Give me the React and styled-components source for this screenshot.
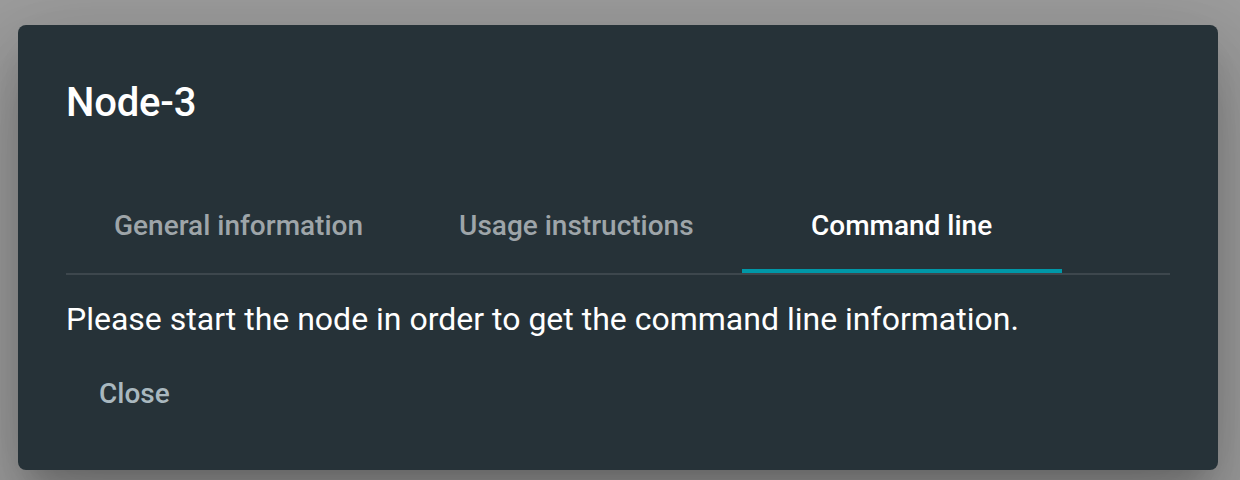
import React, { useState } from 'react';
import styled, { createGlobalStyle } from 'styled-components';

const GlobalStyle = createGlobalStyle`
    html, body {
        margin: 0;
        padding: 0;
        background: #ffffff;
        font-family: Roboto, "Noto Sans", "Liberation Sans", sans-serif;
        -webkit-font-smoothing: antialiased;
    }
`;

const TABS = [ 'General information', 'Usage instructions', 'Command line' ];

const
    Backdrop = styled.div`
        width: 1240px;
        height: 480px;
        box-sizing: border-box;
        padding: 25px 22px 0 18px;
        background-color: rgba(0, 0, 0, 0.385);
        overflow: hidden;
    `,
    Dialog = styled.div`
        width: 1200px;
        height: 445px;
        box-sizing: border-box;
        padding: 0 48px;
        display: flex;
        flex-direction: column;
        background-color: #263238;
        color: #ffffff;
        border-radius: 8px;
        box-shadow: 0 22px 30px -14px rgba(0,0,0,0.2),
                    0 48px 76px 6px rgba(0,0,0,0.14),
                    0 18px 92px 16px rgba(0,0,0,0.12);
    `,
    Title = styled.h2`
        margin: 46px 0 0;
        font-size: 40px;
        font-weight: 500;
        line-height: 64px;
        letter-spacing: -0.2px;
    `,
    TabBar = styled.div`
        display: flex;
        margin-top: 42px;
        border-bottom: 2px solid #3d474d;
    `,
    Tab = styled.button`
        position: relative;
        min-width: 320px;
        height: 96px;
        padding: 0 48px;
        border: 0;
        background: none;
        font-family: inherit;
        font-size: 28px;
        font-weight: 500;
        line-height: 49px;
        color: ${ props => props.$active ? '#ffffff' : '#9ea5a9' };
        cursor: pointer;
        &::after {
            content: '';
            position: absolute;
            left: 0;
            right: 0;
            bottom: 0;
            height: 4px;
            background-color: ${ props => props.$active ? '#0097a7' : 'transparent' };
        }
    `,
    Message = styled.p`
        margin: 20px 0 0;
        font-size: 32px;
        font-weight: 400;
        line-height: 48px;
    `,
    Actions = styled.div`
        display: flex;
        margin-top: 26px;
    `,
    TextButton = styled.button`
        padding: 0 33px;
        border: 0;
        background: none;
        font-family: inherit;
        font-size: 28px;
        font-weight: 500;
        line-height: 49px;
        color: #a9b8bf;
        cursor: pointer;
    `
;

const App = () => {
    const [ tab, setTab ] = useState( 2 );

    return (
        <>
            <GlobalStyle />
            <Backdrop>
                <Dialog>
                    <Title>Node-3</Title>
                    <TabBar>
                        { TABS.map( ( label, i ) => (
                            <Tab key={ label } $active={ i === tab } onClick={ () => setTab( i ) }>
                                { label }
                            </Tab>
                        ) ) }
                    </TabBar>
                    <Message>Please start the node in order to get the command line information.</Message>
                    <Actions>
                        <TextButton>Close</TextButton>
                    </Actions>
                </Dialog>
            </Backdrop>
        </>
    );
};

export default App;
